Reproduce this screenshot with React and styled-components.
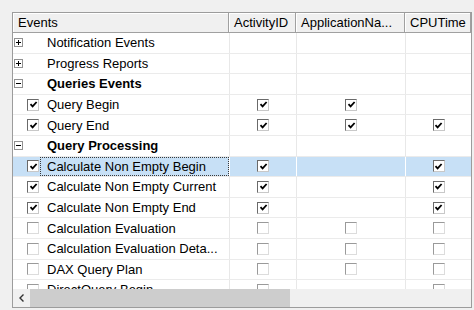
import React from 'react'
import styled, { createGlobalStyle } from 'styled-components'

const GlobalStyle = createGlobalStyle`
    html, body {
        margin: 0;
        padding: 0;
        background: #f0f0f0;
        font-family: "Liberation Sans", Arial, sans-serif;
        font-size: 13px;
        color: #000;
    }
`

const rows = [
    { type: 'group', label: 'Notification Events', open: false },
    { type: 'group', label: 'Progress Reports', open: false },
    { type: 'group', label: 'Queries Events', open: true },
    { type: 'event', label: 'Query Begin', on: true, cols: [true, true, null] },
    { type: 'event', label: 'Query End', on: true, cols: [true, true, true] },
    { type: 'group', label: 'Query Processing', open: true },
    { type: 'event', label: 'Calculate Non Empty Begin', on: true, cols: [true, null, true], selected: true },
    { type: 'event', label: 'Calculate Non Empty Current', on: true, cols: [true, null, true] },
    { type: 'event', label: 'Calculate Non Empty End', on: true, cols: [true, null, true] },
    { type: 'event', label: 'Calculation Evaluation', on: false, cols: [false, false, false] },
    { type: 'event', label: 'Calculation Evaluation Deta...', on: false, cols: [false, false, false] },
    { type: 'event', label: 'DAX Query Plan', on: false, cols: [false, false, false] },
    { type: 'event', label: 'DirectQuery Begin', on: false, cols: [false, null, false] },
]

const columns = ['Events', 'ActivityID', 'ApplicationNa...', 'CPUTime']

function CheckBox({ checked }) {
    return (
        <Box $checked={checked}>
            {checked && (
                <svg width="9" height="9" viewBox="0 0 9 9">
                    <path d="M1.5 4.2 L3.6 6.4 L7.6 2" fill="none" stroke="#000" strokeWidth="1.8" />
                </svg>
            )}
        </Box>
    )
}

function Expander({ open }) {
    return (
        <ExpandBox>
            <svg width="7" height="7" viewBox="0 0 7 7">
                <path d="M1 3.5 H6" stroke="#000" strokeWidth="1" />
                {!open && <path d="M3.5 1 V6" stroke="#000" strokeWidth="1" />}
            </svg>
        </ExpandBox>
    )
}

function App() {
    return (
        <Page>
            <GlobalStyle />
            <Frame>
                <HeaderRow>
                    {columns.map(c => (
                        <HeaderCell key={c}>{c}</HeaderCell>
                    ))}
                </HeaderRow>
                <Body>
                    {rows.map(r => (
                        <Row key={r.label} $selected={r.selected}>
                            <EventCell>
                                <ExpandSlot>
                                    {r.type === 'group' && <Expander open={r.open} />}
                                </ExpandSlot>
                                <CheckSlot>
                                    {r.type === 'event' && <CheckBox checked={r.on} />}
                                </CheckSlot>
                                <Label $bold={r.type === 'group' && r.open} $focus={r.selected}>
                                    {r.label}
                                </Label>
                            </EventCell>
                            {[0, 1, 2].map(i => (
                                <DataCell key={i} $selected={r.selected}>
                                    {r.cols && r.cols[i] !== null && <CheckBox checked={r.cols[i]} />}
                                </DataCell>
                            ))}
                        </Row>
                    ))}
                </Body>
                <ScrollBar>
                    <ArrowButton>
                        <svg width="8" height="10" viewBox="0 0 8 10">
                            <path d="M5.5 1.5 L2 5 L5.5 8.5" fill="none" stroke="#333" strokeWidth="1.4" />
                        </svg>
                    </ArrowButton>
                    <Thumb />
                </ScrollBar>
            </Frame>
        </Page>
    )
}

const Page = styled.div`
    width: 474px;
    height: 310px;
    padding: 12px 0 0 12px;
    box-sizing: border-box;
    overflow: hidden;
`

const grid = `
    display: grid;
    grid-template-columns: 216px 67px 109px 66px;
`

const Frame = styled.div`
    width: 460px;
    height: 296px;
    box-sizing: border-box;
    border: 1px solid #9c9c9c;
    background: #fff;
    display: flex;
    flex-direction: column;
`

const HeaderRow = styled.div`
    ${grid}
    height: 20px;
    flex-shrink: 0;
`

const HeaderCell = styled.div`
    box-sizing: border-box;
    background: #f0f0f0;
    border-right: 1px solid #a0a0a0;
    border-bottom: 1px solid #a0a0a0;
    box-shadow: inset 1px 1px 0 #fff;
    padding: 0 0 0 5px;
    line-height: 19px;
    white-space: nowrap;
    overflow: hidden;
`

const Body = styled.div`
    height: 256px;
    overflow: hidden;
    flex-shrink: 0;
`

const Row = styled.div`
    ${grid}
    height: 20.6px;
    box-sizing: border-box;
    border-bottom: 1px solid #ebebeb;
    background: ${p => (p.$selected ? '#c7e0f6' : '#fff')};
`

const EventCell = styled.div`
    display: flex;
    align-items: center;
    padding-left: 1px;
    min-width: 0;
`

const ExpandSlot = styled.div`
    width: 13px;
    flex-shrink: 0;
    display: flex;
    align-items: center;
`

const ExpandBox = styled.div`
    width: 9px;
    height: 9px;
    box-sizing: border-box;
    border: 1px solid #919191;
    background: #fff;
    display: flex;
    align-items: center;
    justify-content: center;
    svg { display: block; }
`

const CheckSlot = styled.div`
    width: 13px;
    flex-shrink: 0;
    display: flex;
    align-items: center;
`

const Label = styled.div`
    flex: 1;
    align-self: stretch;
    display: flex;
    align-items: center;
    box-sizing: border-box;
    padding-left: 6px;
    border: 1px dotted ${p => (p.$focus ? '#3a3a3a' : 'transparent')};
    font-weight: ${p => (p.$bold ? 'bold' : 'normal')};
    white-space: nowrap;
    overflow: hidden;
`

const DataCell = styled.div`
    border-left: 1px solid ${p => (p.$selected ? '#ffffff' : '#e8e8e8')};
    display: flex;
    align-items: center;
    justify-content: center;
`

const Box = styled.div`
    width: 12px;
    height: 12px;
    box-sizing: border-box;
    background: #fff;
    border-top: 1px solid ${p => (p.$checked ? '#6a6a6a' : '#9a9a9a')};
    border-left: 1px solid ${p => (p.$checked ? '#6a6a6a' : '#9a9a9a')};
    border-bottom: 1px solid ${p => (p.$checked ? '#c8c8c8' : '#dcdcdc')};
    border-right: 1px solid ${p => (p.$checked ? '#c8c8c8' : '#dcdcdc')};
    display: flex;
    align-items: center;
    justify-content: center;
    svg { display: block; }
`

const ScrollBar = styled.div`
    height: 18px;
    flex-shrink: 0;
    background: #f0f0f0;
    display: flex;
    align-items: stretch;
`

const ArrowButton = styled.div`
    width: 17px;
    display: flex;
    align-items: center;
    justify-content: center;
`

const Thumb = styled.div`
    width: 260px;
    background: #cdcdcd;
`

export default App
